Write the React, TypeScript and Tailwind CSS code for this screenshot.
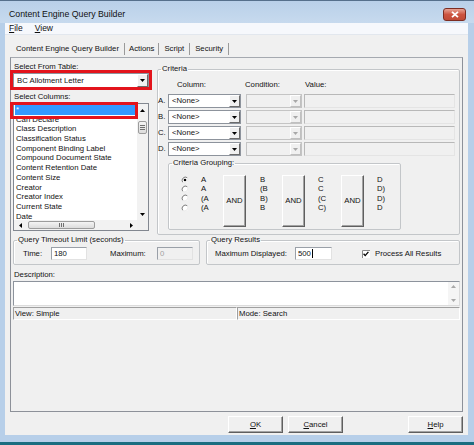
import React from "react";

const COLUMNS = [
  "*",
  "Can Declare",
  "Class Description",
  "Classification Status",
  "Component Binding Label",
  "Compound Document State",
  "Content Retention Date",
  "Content Size",
  "Creator",
  "Creator Index",
  "Current State",
  "Date",
];

const GROUPS = [
  ["A", "A", "(A", "(A"],
  ["B", "(B", "B)", "B"],
  ["C", "C", "(C", "C)"],
  ["D", "D)", "D)", "D"],
];

function Arrow({ dir = "down", color = "#000" }: { dir?: "down" | "up" | "left" | "right"; color?: string }) {
  const d = {
    down: "M0 0h5L2.5 3z",
    up: "M0 3h5L2.5 0z",
    left: "M3 0v5L0 2.5z",
    right: "M0 0v5L3 2.5z",
  }[dir];
  const vertical = dir === "down" || dir === "up";
  return (
    <svg width={vertical ? 5 : 3} height={vertical ? 3 : 5} viewBox={vertical ? "0 0 5 3" : "0 0 3 5"}>
      <path d={d} fill={color} />
    </svg>
  );
}

function Combo({ text, className, disabled }: { text?: string; className: string; disabled?: boolean }) {
  return (
    <div
      className={`flex border ${
        disabled ? "border-[#c4c4c4] bg-[#f0f0f0]" : "border-[#8d939c] bg-white"
      } ${className}`}
    >
      <div className="flex-1 flex items-center pl-[3px] whitespace-nowrap overflow-hidden">{text}</div>
      <div
        className={`w-[11px] flex items-center justify-center bg-[#f0f0f0] border border-t-white border-l-white ${
          disabled ? "border-r-[#c0c0c0] border-b-[#c0c0c0]" : "border-r-[#6b6b6b] border-b-[#6b6b6b]"
        }`}
      >
        <Arrow color={disabled ? "#a8a8a8" : "#000"} />
      </div>
    </div>
  );
}

function Field({ children, className }: { children?: React.ReactNode; className: string }) {
  return (
    <div
      className={`flex items-center pl-[2px] border border-[#9aa0a8] border-r-[#e2e2e2] border-b-[#e2e2e2] ${className}`}
    >
      {children}
    </div>
  );
}

function Group({ label, className, children }: { label: string; className: string; children?: React.ReactNode }) {
  return (
    <fieldset className={`border border-[#c3c6c9] rounded-[2px] shadow-[inset_1px_1px_0_#ffffff] ${className}`}>
      <legend className="leading-[10px] px-[1px] ml-[3px]">{label}</legend>
      {children}
    </fieldset>
  );
}

function Radio({ checked }: { checked?: boolean }) {
  return (
    <svg width="8" height="8" viewBox="0 0 8 8">
      <circle cx="4" cy="4" r="3.2" fill="#fff" />
      <path d="M6.3 1.7A3.3 3.3 0 0 0 1.7 6.3" fill="none" stroke="#7a7a7a" strokeWidth="1" />
      <path d="M1.7 6.3A3.3 3.3 0 0 0 6.3 1.7" fill="none" stroke="#e8e8e8" strokeWidth="1" />
      {checked && <circle cx="4" cy="4" r="1.3" fill="#000" />}
    </svg>
  );
}

function ClassicButton({ children, className }: { children: React.ReactNode; className: string }) {
  return (
    <div
      className={`flex items-center justify-center bg-[#f0f0f0] border border-t-white border-l-white border-r-[#5f5f5f] border-b-[#5f5f5f] shadow-[inset_-1px_-1px_0_#a3a3a3] ${className}`}
    >
      {children}
    </div>
  );
}

function Thumb({ vertical }: { vertical?: boolean }) {
  return (
    <div
      className={`flex items-center justify-center border border-[#9c9c9c] rounded-[2px] bg-gradient-to-b from-[#f4f4f4] to-[#dcdcdc] ${
        vertical ? "h-[13px] w-[9px] mx-auto flex-col gap-[1px]" : "w-[67px] h-[8px] gap-[1px]"
      }`}
    >
      {[0, 1, 2].map((i) => (
        <div key={i} className={vertical ? "w-[5px] h-px bg-[#707070]" : "h-[4px] w-px bg-[#707070]"} />
      ))}
    </div>
  );
}

export default function App() {
  return (
    <div className="relative w-[474px] h-[445px] overflow-hidden bg-[#b7cfe9] font-['Liberation_Sans',Arial,sans-serif] text-[7.75px] leading-none text-[#111] flex flex-col">
      {/* title bar */}
      <div className="h-[23px] shrink-0 flex items-start justify-between border-t border-[#56708c] bg-gradient-to-b from-[#b9d0e9] to-[#c7daee]">
        <span className="ml-[9px] mt-[8px] text-[8.75px] leading-[10px]">Content Engine Query Builder</span>
        <div className="mt-[7px] mr-[8px] w-[23px] h-[13px] rounded-[3px] border border-[#7d2d22] bg-gradient-to-b from-[#e7a395] via-[#cc5440] to-[#c04a36] flex items-center justify-center">
          <svg width="8" height="7" viewBox="0 0 8 7">
            <path d="M1 0.8L7 6.2M7 0.8L1 6.2" stroke="#fff" strokeWidth="1.8" />
          </svg>
        </div>
      </div>

      {/* client area */}
      <div className="ml-[5px] mr-[6px] h-[412px] shrink-0 bg-[#f0f0f0] flex flex-col">
        <div className="h-[12px] flex items-center bg-[#f6f8fc] border-b border-[#e2e7ee] text-[8.5px]">
          <span className="ml-[4px]">
            <span className="underline">F</span>ile
          </span>
          <span className="ml-[12px]">
            <span className="underline">V</span>iew
          </span>
        </div>

        {/* tabs */}
        <div className="h-[22px] flex items-end pl-[5px]">
          <div className="h-[16px] flex items-center">
            <span className="pl-[6px] pr-[5px]">Content Engine Query Builder</span>
            <span className="w-px h-[12px] bg-[#9a9a9a]" />
            <span className="px-[4px]">Actions</span>
            <span className="w-px h-[12px] bg-[#9a9a9a]" />
            <span className="pl-[5px] pr-[5px]">Script</span>
            <span className="w-px h-[12px] bg-[#9a9a9a]" />
            <span className="pl-[5px] pr-[5px]">Security</span>
            <span className="w-px h-[12px] bg-[#9a9a9a]" />
          </div>
        </div>

        {/* tab page */}
        <div className="ml-[5px] w-[453px] h-[355px] border border-[#8d9199] border-t-[#a5a9b0] flex flex-col">
          <div className="flex items-start pl-[2px]">
            {/* left column */}
            <div className="w-[136px] flex flex-col">
              <div className="mt-[4px] leading-[10px] pl-[1px]">Select From Table:</div>
              <Combo text="BC Allotment Letter" className="mt-[1px] h-[15px] w-[136px]" />
              <div className="mt-[4px] leading-[10px] pl-[1px]">Select Columns:</div>
              <div className="mt-[1px] w-[136px] h-[128px] bg-white border border-[#828790] flex flex-col">
                <div className="flex flex-1 min-h-0">
                  <div className="flex-1 overflow-hidden pt-[1px]">
                    {COLUMNS.map((c, i) => (
                      <div
                        key={c}
                        className={`h-[9.7px] leading-[9.7px] mx-[1px] pl-[1px] whitespace-nowrap ${
                          i === 0 ? "bg-[#3399ff] text-white" : ""
                        }`}
                      >
                        {c}
                      </div>
                    ))}
                  </div>
                  <div className="w-[11px] bg-[#f2f2f2] flex flex-col">
                    <div className="h-[12px] flex items-center justify-center">
                      <Arrow dir="up" />
                    </div>
                    <div className="mt-[5px]">
                      <Thumb vertical />
                    </div>
                    <div className="flex-1" />
                    <div className="h-[12px] flex items-center justify-center">
                      <Arrow dir="down" />
                    </div>
                  </div>
                </div>
                <div className="h-[10px] flex bg-[#f2f2f2]">
                  <div className="w-[12px] flex items-center justify-center">
                    <Arrow dir="left" />
                  </div>
                  <div className="ml-[2px] flex items-center">
                    <Thumb />
                  </div>
                  <div className="flex-1" />
                  <div className="w-[12px] flex items-center justify-center">
                    <Arrow dir="right" />
                  </div>
                  <div className="w-[11px] bg-[#f0f0f0]" />
                </div>
              </div>
            </div>

            {/* criteria */}
            <Group label="Criteria" className="ml-[8px] mt-[6px] w-[303px] h-[171px]">
              <div className="mt-[6px] h-[10px] leading-[10px] flex pl-[19px]">
                <span className="w-[68px]">Column:</span>
                <span className="w-[60px]">Condition:</span>
                <span>Value:</span>
              </div>
              <div className="mt-[4px] flex flex-col gap-[2px]">
                {["A.", "B.", "C.", "D."].map((r) => (
                  <div key={r} className="h-[14px] flex items-center">
                    <span className="w-[10px]">{r}</span>
                    <Combo text="<None>" className="w-[73px] h-[14px]" />
                    <Combo disabled className="ml-[5px] w-[56px] h-[14px]" />
                    <div className="ml-[2px] w-[151px] h-[14px] bg-[#f0f0f0] border border-[#b8b8b8] border-r-[#e4e4e4] border-b-[#e4e4e4]" />
                  </div>
                ))}
              </div>
              <Group label="Criteria Grouping:" className="ml-[10px] mt-[2px] w-[230px] h-[72px]">
                <div className="flex items-start">
                  <div className="ml-[12px] mt-[7px] w-[9px] flex flex-col">
                    {[true, false, false, false].map((c, i) => (
                      <div key={i} className="h-[9.3px] flex items-center">
                        <Radio checked={c} />
                      </div>
                    ))}
                  </div>
                  {GROUPS.map((g, gi) => (
                    <React.Fragment key={gi}>
                      <div className={`${gi === 0 ? "ml-[11px] w-[22px]" : gi === 1 ? "ml-[14px] w-[22px]" : "ml-[13px] w-[23px]"} mt-[7px] flex flex-col`}>
                        {g.map((t, ti) => (
                          <div key={ti} className="h-[9.3px] leading-[9.3px]">
                            {t}
                          </div>
                        ))}
                      </div>
                      {gi < 3 && (
                        <ClassicButton className="mt-[7px] w-[23px] h-[52px]">AND</ClassicButton>
                      )}
                    </React.Fragment>
                  ))}
                </div>
              </Group>
            </Group>
          </div>

          {/* query limits */}
          <div className="flex pl-[2px]">
            <Group label="Query Timeout Limit (seconds)" className="w-[187px] h-[30px]">
              <div className="mt-[2px] h-[13px] flex items-center pl-[9px]">
                <span className="w-[28px]">Time:</span>
                <Field className="w-[36px] h-[13px] bg-white">180</Field>
                <span className="ml-[23px] w-[47px]">Maximum:</span>
                <Field className="w-[36px] h-[13px] bg-[#f0f0f0] text-[#a0a0a0]">0</Field>
              </div>
            </Group>
            <Group label="Query Results" className="ml-[6px] w-[254px] h-[30px]">
              <div className="mt-[2px] h-[13px] flex items-center pl-[8px]">
                <span className="w-[80px]">Maximum Displayed:</span>
                <Field className="w-[37px] h-[13px] bg-white">
                  500
                  <span className="ml-px w-px h-[9px] bg-black" />
                </Field>
                <svg className="ml-[30px]" width="8" height="8" viewBox="0 0 8 8">
                  <rect x="0" y="0" width="8" height="8" fill="#fff" />
                  <path d="M0.5 8V0.5H8" fill="none" stroke="#8a8a8a" />
                  <path d="M1.6 3.8L3.2 5.6L6.4 1.8" fill="none" stroke="#000" strokeWidth="1.3" />
                </svg>
                <span className="ml-[5px]">Process All Results</span>
              </div>
            </Group>
          </div>

          <div className="mt-[5px] leading-[10px] pl-[3px]">Description:</div>
          <div className="mt-[1px] ml-[2px] w-[447px] h-[25px] bg-white border border-[#8d939c] border-r-[#dcdcdc] border-b-[#dcdcdc] flex justify-end">
            <div className="w-[11px] bg-[#f5f5f5] flex flex-col justify-between py-[3px] items-center">
              <Arrow dir="up" color="#a8a8a8" />
              <Arrow dir="down" color="#a8a8a8" />
            </div>
          </div>
          <div className="mt-[1px] ml-[2px] w-[447px] h-[13px] flex">
            <div className="w-[224px] flex items-center pl-[1px] border border-[#a0a0a0] border-r-white border-b-white">
              View: Simple
            </div>
            <div className="flex-1 flex items-center pl-[1px] border border-[#a0a0a0] border-r-white border-b-white">
              Mode: Search
            </div>
          </div>
        </div>

        {/* buttons */}
        <div className="mt-[4px] flex justify-end pr-[5px]">
          <ClassicButton className="w-[55px] h-[17px]">
            <span>
              <span className="underline">O</span>K
            </span>
          </ClassicButton>
          <ClassicButton className="ml-[5px] w-[55px] h-[17px]">
            <span>
              <span className="underline">C</span>ancel
            </span>
          </ClassicButton>
          <ClassicButton className="ml-[65px] w-[55px] h-[17px]">
            <span>
              <span className="underline">H</span>elp
            </span>
          </ClassicButton>
        </div>
      </div>

      <div className="flex-1" />
      <div className="h-[3px] shrink-0 bg-[#1b6d80]" />

      {/* red annotation boxes */}
      <div className="absolute left-[10px] top-[70px] w-[142px] h-[20px] border-[3px] border-[#e3141c]" />
      <div className="absolute left-[10px] top-[102px] w-[128px] h-[17px] border-[3px] border-[#e3141c]" />
    </div>
  );
}
